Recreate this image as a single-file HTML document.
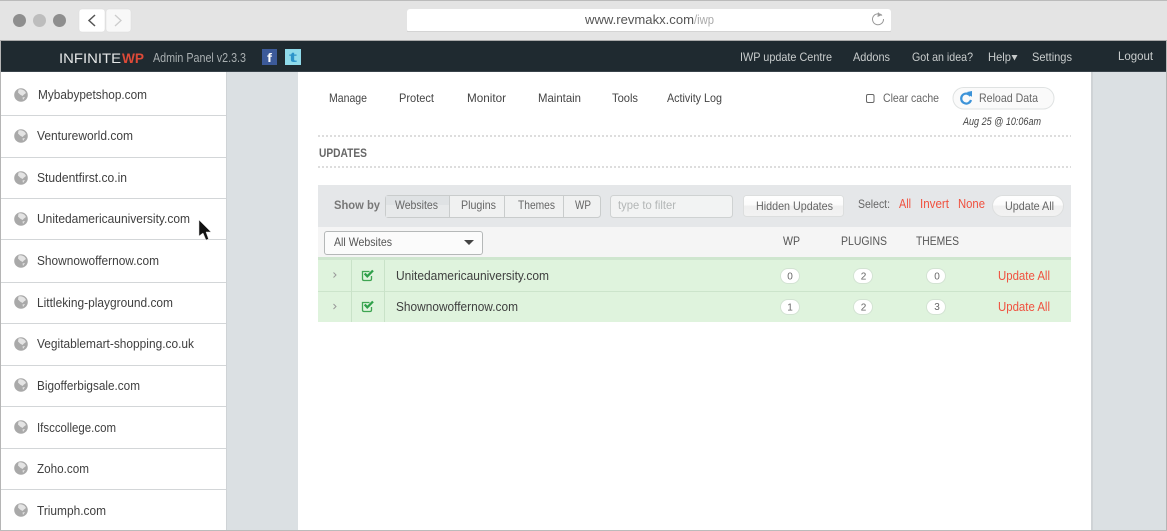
<!DOCTYPE html>
<html>
<head>
<meta charset="utf-8">
<style>
html,body{margin:0;padding:0;background:#fff;width:1167px;height:531px;overflow:hidden}
svg{display:block;position:absolute;left:0;top:0}
text{font-family:"Liberation Sans",sans-serif;font-size:12px;fill:#555}
.s{fill:#3f3f3f;font-size:12.500px}
.t{fill:#444;font-size:12px}
.r{fill:#f0513f;font-size:12.500px}
.n{fill:#c9cdcd;font-size:12px}
.m{fill:#666;font-size:10px}
.g{fill:#666;font-size:12px}
</style>
</head>
<body>
<svg width="1167" height="531" viewBox="0 0 1167 531" xmlns="http://www.w3.org/2000/svg">
<defs>
<g id="globe">
<circle cx="0" cy="0" r="6.800" fill="#a9a9a9"/>
<path d="M-2.500-5.500 C0-6.500 4-5 5-2 L3-.5 L1.500 1 L-1-.5 L-3-2.500 Z M1.500 2.500 L4 2 L2 5 Z" fill="#e4e4e4"/>
</g>
<linearGradient id="btn" x1="0" y1="0" x2="0" y2="1"><stop offset="0" stop-color="#fff"/><stop offset=".45" stop-color="#fbfbfb"/><stop offset=".5" stop-color="#f0f0f0"/><stop offset="1" stop-color="#f2f2f2"/></linearGradient>
<g id="chk" fill="none">
<path d="M2.500 0.500H-4.500V8Q-4.500 9.500 -3 9.500H3Q4.500 9.500 4.500 8V5" stroke="#3fa552" stroke-width="1.300"/>
<path d="M-2.300 2.500 L0.300 5.300 L6 -0.500" stroke="#2fa04a" stroke-width="2.300"/>
</g>
</defs>

<!-- Browser chrome -->
<rect width="1167" height="531" fill="#fff"/>
<rect x="0" y="0" width="1167" height="41" fill="#e4e4e4"/>
<rect x="0" y="0" width="1167" height="1" fill="#bbb"/>
<rect x="0" y="40" width="1167" height="1" fill="#aaa"/>
<circle cx="19.500" cy="20.500" r="6.500" fill="#8e8e8e"/>
<circle cx="39.500" cy="20.500" r="6.500" fill="#bdbdbd"/>
<circle cx="59.500" cy="20.500" r="6.500" fill="#8e8e8e"/>
<rect x="79" y="9" width="26" height="23" rx="3" fill="#fff" stroke="#dcdcdc" stroke-width=".5"/>
<rect x="106" y="9" width="25" height="23" rx="3" fill="#f8f8f8" stroke="#dcdcdc" stroke-width=".5"/>
<path d="M95 15 L89 20.500 L95 26" fill="none" stroke="#555" stroke-width="1.500"/>
<path d="M115 15 L121 20.500 L115 26" fill="none" stroke="#ccc" stroke-width="1.300"/>
<rect x="407" y="9" width="484" height="23" rx="3" fill="#fff"/>
<rect x="407" y="31" width="484" height="1" fill="#d4d4d4"/>
<text x="585" y="24" textLength="109" lengthAdjust="spacingAndGlyphs" style="fill:#555;font-size:12.500px">www.revmakx.com</text>
<text x="694" y="24" textLength="20" lengthAdjust="spacingAndGlyphs" style="fill:#aaa;font-size:12.500px">/iwp</text>
<path d="M882 15.500 A5.500 5.500 0 1 0 883.500 19" fill="none" stroke="#999" stroke-width="1"/>
<path d="M878 12 L881 15.500 L877.500 17" fill="#999"/>

<!-- Top nav -->
<rect x="0" y="41" width="1167" height="31" fill="#1f2a30"/>
<rect x="0" y="71" width="1167" height="1" fill="#39434a"/>
<text x="59" y="63" textLength="62" lengthAdjust="spacingAndGlyphs" style="font-size:14px;fill:#e4e6e6">INFINITE</text>
<text x="122" y="63" textLength="22" lengthAdjust="spacingAndGlyphs" style="font-size:14px;font-weight:bold;fill:#dd4a38">WP</text>
<text x="153" y="62" textLength="93" lengthAdjust="spacingAndGlyphs" style="fill:#a9afb1;font-size:12.500px">Admin Panel v2.3.3</text>
<rect x="262" y="49" width="15" height="16" fill="#3c5a99"/>
<text x="267" y="62" textLength="5" lengthAdjust="spacingAndGlyphs" style="fill:#fff;font-weight:bold;font-size:12px">f</text>
<rect x="285" y="49" width="16" height="16" fill="#8fdaea"/>
<text x="289" y="62" textLength="8" lengthAdjust="spacingAndGlyphs" style="fill:#2c93c9;font-weight:bold;font-size:14px">t</text>
<text class="n" x="740" y="61" textLength="92" lengthAdjust="spacingAndGlyphs">IWP update Centre</text>
<text class="n" x="853" y="61" textLength="37" lengthAdjust="spacingAndGlyphs">Addons</text>
<text class="n" x="912" y="61" textLength="61" lengthAdjust="spacingAndGlyphs">Got an idea?</text>
<text class="n" x="988" y="61" textLength="23" lengthAdjust="spacingAndGlyphs">Help</text>
<path d="M1011.500 55 L1017.500 55 L1014.500 60.500 Z" fill="#c6caca"/>
<text class="n" x="1032" y="61" textLength="40" lengthAdjust="spacingAndGlyphs">Settings</text>
<text class="n" x="1118" y="60" textLength="35" lengthAdjust="spacingAndGlyphs">Logout</text>

<!-- Page areas -->
<rect x="227" y="72" width="940" height="459" fill="#dbe0e3"/>
<rect x="298" y="72" width="793" height="459" fill="#fff"/>
<rect x="1091" y="72" width="2" height="459" fill="#cfd3d6"/>
<rect x="0" y="72" width="227" height="459" fill="#fff"/>
<rect x="226" y="72" width="1" height="459" fill="#cfd3d6"/>
<rect x="0" y="41" width="1" height="490" fill="#b5b5b5"/>
<rect x="1166" y="41" width="1" height="490" fill="#b5b5b5"/>
<rect x="0" y="530" width="1167" height="1" fill="#bbb"/>

<!-- Sidebar -->
<g fill="#d3d6d8">
<rect x="1" y="115" width="225" height="1"/><rect x="1" y="157" width="225" height="1"/><rect x="1" y="198" width="225" height="1"/><rect x="1" y="239" width="225" height="1"/><rect x="1" y="282" width="225" height="1"/><rect x="1" y="323" width="225" height="1"/><rect x="1" y="365" width="225" height="1"/><rect x="1" y="406" width="225" height="1"/><rect x="1" y="448" width="225" height="1"/><rect x="1" y="489" width="225" height="1"/>
</g>
<use href="#globe" x="21" y="95"/><use href="#globe" x="21" y="136"/><use href="#globe" x="21" y="178"/><use href="#globe" x="21" y="219"/><use href="#globe" x="21" y="261"/><use href="#globe" x="21" y="302"/><use href="#globe" x="21" y="344"/><use href="#globe" x="21" y="385"/><use href="#globe" x="21" y="427"/><use href="#globe" x="21" y="468"/><use href="#globe" x="21" y="510"/>
<text class="s" x="38" y="99" textLength="109" lengthAdjust="spacingAndGlyphs">Mybabypetshop.com</text>
<text class="s" x="37" y="140" textLength="96" lengthAdjust="spacingAndGlyphs">Ventureworld.com</text>
<text class="s" x="37" y="182" textLength="90" lengthAdjust="spacingAndGlyphs">Studentfirst.co.in</text>
<text class="s" x="37" y="223" textLength="153" lengthAdjust="spacingAndGlyphs">Unitedamericauniversity.com</text>
<text class="s" x="37" y="265" textLength="122" lengthAdjust="spacingAndGlyphs">Shownowoffernow.com</text>
<text class="s" x="37" y="307" textLength="136" lengthAdjust="spacingAndGlyphs">Littleking-playground.com</text>
<text class="s" x="37" y="348" textLength="157" lengthAdjust="spacingAndGlyphs">Vegitablemart-shopping.co.uk</text>
<text class="s" x="37" y="390" textLength="103" lengthAdjust="spacingAndGlyphs">Bigofferbigsale.com</text>
<text class="s" x="37" y="432" textLength="79" lengthAdjust="spacingAndGlyphs">Ifsccollege.com</text>
<text class="s" x="37" y="473" textLength="52" lengthAdjust="spacingAndGlyphs">Zoho.com</text>
<text class="s" x="37" y="515" textLength="69" lengthAdjust="spacingAndGlyphs">Triumph.com</text>

<!-- Cursor -->
<path d="M199 220 L199 236 L203 233 L206 240 L208.500 239 L206 232 L211 232 Z" fill="#111" stroke="#ddd" stroke-width=".5"/>

<!-- Sub nav -->
<text class="t" x="329" y="102" textLength="38" lengthAdjust="spacingAndGlyphs">Manage</text>
<text class="t" x="399" y="102" textLength="35" lengthAdjust="spacingAndGlyphs">Protect</text>
<text class="t" x="467" y="102" textLength="39" lengthAdjust="spacingAndGlyphs">Monitor</text>
<text class="t" x="538" y="102" textLength="43" lengthAdjust="spacingAndGlyphs">Maintain</text>
<text class="t" x="612" y="102" textLength="26" lengthAdjust="spacingAndGlyphs">Tools</text>
<text class="t" x="667" y="102" textLength="55" lengthAdjust="spacingAndGlyphs">Activity Log</text>
<rect x="866.500" y="94.500" width="7.500" height="8" rx="1.500" fill="#fff" stroke="#666"/>
<text x="883" y="102" textLength="56" lengthAdjust="spacingAndGlyphs" style="fill:#666">Clear cache</text>
<rect x="953" y="87.500" width="101" height="21.500" rx="10.700" fill="#fafafa" stroke="#dfe2e2"/>
<path d="M970.500 96 A5 5 0 1 0 971 100" fill="none" stroke="#3d93d8" stroke-width="2.200"/>
<path d="M967 92 L972 91 L972 97 Z" fill="#3d93d8"/>
<text x="979" y="102" textLength="59" lengthAdjust="spacingAndGlyphs" style="fill:#666">Reload Data</text>
<text x="963" y="125" textLength="78" lengthAdjust="spacingAndGlyphs" style="font-size:11px;font-style:italic;fill:#444">Aug 25 @ 10:06am</text>

<!-- Updates heading -->
<line x1="318" y1="136" x2="1071" y2="136" stroke="#bbb" stroke-dasharray="2 2"/>
<line x1="318" y1="167" x2="1071" y2="167" stroke="#bbb" stroke-dasharray="2 2"/>
<text x="319" y="157" textLength="48" lengthAdjust="spacingAndGlyphs" style="font-weight:bold;font-size:11.500px;fill:#666">UPDATES</text>

<!-- Filter bar -->
<rect x="318" y="185" width="753" height="42" fill="#e5e7e9"/>
<text x="334" y="209" textLength="46" lengthAdjust="spacingAndGlyphs" style="font-weight:bold;fill:#777;font-size:12px">Show by</text>
<rect x="385.500" y="195.500" width="215" height="22" rx="3" fill="#f0f1f1" stroke="#c9cccc"/>
<rect x="386" y="196" width="63" height="9" fill="#dfe2e4"/>
<rect x="386" y="205" width="63" height="12" fill="#e7e9ea"/>
<rect x="449" y="195" width="1" height="23" fill="#c9cccc"/>
<rect x="504" y="195" width="1" height="23" fill="#c9cccc"/>
<rect x="563" y="195" width="1" height="23" fill="#c9cccc"/>
<text class="g" x="395" y="209" textLength="43" lengthAdjust="spacingAndGlyphs">Websites</text>
<text class="g" x="461" y="209" textLength="35" lengthAdjust="spacingAndGlyphs">Plugins</text>
<text class="g" x="518" y="209" textLength="37" lengthAdjust="spacingAndGlyphs">Themes</text>
<text class="g" x="575" y="209" textLength="16" lengthAdjust="spacingAndGlyphs">WP</text>
<rect x="610.500" y="195.500" width="122" height="22" rx="3" fill="#f2f3f3" stroke="#cfd2d2"/>
<text x="618" y="209" textLength="58" lengthAdjust="spacingAndGlyphs" style="fill:#b3b6b6">type to filter</text>
<rect x="743.500" y="195.500" width="100" height="21" rx="3" fill="url(#btn)" stroke="#dcdede"/>
<text class="g" x="756" y="210" textLength="77" lengthAdjust="spacingAndGlyphs">Hidden Updates</text>
<text x="858" y="208" textLength="32" lengthAdjust="spacingAndGlyphs" style="fill:#666">Select:</text>
<text class="r" x="899" y="208" textLength="12" lengthAdjust="spacingAndGlyphs">All</text>
<text class="r" x="920" y="208" textLength="29" lengthAdjust="spacingAndGlyphs">Invert</text>
<text class="r" x="958" y="208" textLength="27" lengthAdjust="spacingAndGlyphs">None</text>
<rect x="992.500" y="195.500" width="71" height="21" rx="10.500" fill="url(#btn)" stroke="#dcdede"/>
<text class="g" x="1005" y="210" textLength="49" lengthAdjust="spacingAndGlyphs">Update All</text>

<!-- Table header -->
<rect x="318" y="227" width="753" height="31" fill="#f5f5f5"/>
<rect x="324.500" y="231.500" width="158" height="23" rx="2.500" fill="#fbfbfb" stroke="#b5b8b8"/>
<text x="334" y="246" textLength="58" lengthAdjust="spacingAndGlyphs" style="fill:#555">All Websites</text>
<path d="M464 240 L474 240 L469 245 Z" fill="#444"/>
<text x="783" y="245" textLength="17" lengthAdjust="spacingAndGlyphs" style="fill:#555">WP</text>
<text x="841" y="245" textLength="46" lengthAdjust="spacingAndGlyphs" style="fill:#555">PLUGINS</text>
<text x="916" y="245" textLength="43" lengthAdjust="spacingAndGlyphs" style="fill:#555">THEMES</text>

<!-- Rows -->
<rect x="318" y="258" width="753" height="64" fill="#dff3dd"/>
<rect x="318" y="257" width="753" height="3" fill="#cfe6cf"/>
<rect x="318" y="291" width="753" height="1" fill="#cce4cb"/>
<rect x="351" y="260" width="1" height="62" fill="#c9e2c8"/>
<rect x="384" y="260" width="1" height="62" fill="#c9e2c8"/>
<path d="M333.500 272.500 L336 275 L333.500 277.500 M333.500 304 L336 306.500 L333.500 309" fill="none" stroke="#999" stroke-width="1"/>
<use href="#chk" x="367" y="271"/>
<use href="#chk" x="367" y="302"/>
<text class="s" x="396" y="280" textLength="153" lengthAdjust="spacingAndGlyphs">Unitedamericauniversity.com</text>
<text class="s" x="396" y="311" textLength="122" lengthAdjust="spacingAndGlyphs">Shownowoffernow.com</text>

<g fill="#fff" stroke="#d3e3d3">
<rect x="780.500" y="268.500" width="19" height="15" rx="7.500"/>
<rect x="853.500" y="268.500" width="19" height="15" rx="7.500"/>
<rect x="926.500" y="268.500" width="19" height="15" rx="7.500"/>
<rect x="780.500" y="299.500" width="19" height="15" rx="7.500"/>
<rect x="853.500" y="299.500" width="19" height="15" rx="7.500"/>
<rect x="926.500" y="299.500" width="19" height="15" rx="7.500"/>
</g>
<g text-anchor="middle">
<text class="m" x="790" y="279.500">0</text><text class="m" x="863.500" y="279.500">2</text><text class="m" x="937" y="279.500">0</text>
<text class="m" x="790" y="310.500">1</text><text class="m" x="863.500" y="310.500">2</text><text class="m" x="937" y="310">3</text>
</g>
<text class="r" x="998" y="280" textLength="52" lengthAdjust="spacingAndGlyphs">Update All</text>
<text class="r" x="998" y="311" textLength="52" lengthAdjust="spacingAndGlyphs">Update All</text>
</svg>
</body>
</html>
